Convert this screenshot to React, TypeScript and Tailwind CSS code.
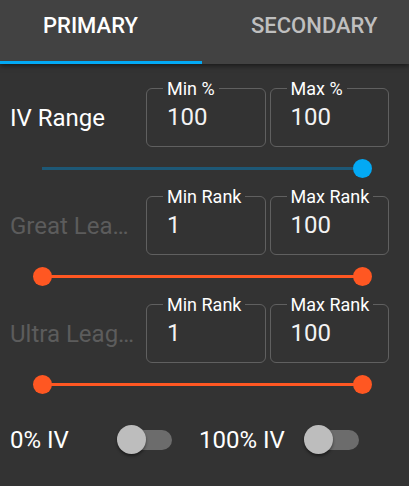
import React from 'react'

// ─── Champ « outlined » façon MUI (label dans l'encoche de la bordure) ───

function OutlinedField({ label, value }: { label: string; value: string }) {
  return (
    <div className="relative h-[59px] flex-1 rounded-[6px] border border-[#606060] pl-[20px] pt-[16px]">
      <span className="absolute left-[16px] top-0 -translate-y-1/2 bg-[#333333] px-[4px] text-[18px] leading-[18px] text-white">
        {label}
      </span>
      <div className="text-[24px] leading-[24px] text-[#f2f2f2]">{value}</div>
    </div>
  )
}

function Row({ label, dim, min, max }: { label: string; dim?: boolean; min: [string, string]; max: [string, string] }) {
  return (
    <div className="flex items-center pl-[10px] pr-[20px]">
      <div
        className={`w-[127px] shrink-0 truncate text-[24px] leading-[28px] ${dim ? 'text-[#5c5c5c]' : 'text-white'}`}
      >
        {label}
      </div>
      <div className="ml-[9px] flex flex-1 gap-[4px]">
        <OutlinedField label={min[0]} value={min[1]} />
        <OutlinedField label={max[0]} value={max[1]} />
      </div>
    </div>
  )
}

function RangeSlider({ variant }: { variant: 'blue' | 'orange' }) {
  const blue = variant === 'blue'
  return (
    <div className="h-[49px] pt-[12px]">
      <div className="relative mx-[42px] h-[19px] w-[320px]">
        <div
          className={`absolute left-0 right-0 top-[8px] h-[3px] ${blue ? 'bg-[#1d5876]' : 'bg-[#ff5722]'}`}
        />
        {!blue && (
          <div className="absolute left-[-9.5px] top-0 h-[19px] w-[19px] rounded-full bg-[#ff5722]" />
        )}
        <div
          className={`absolute right-[-9.5px] top-0 h-[19px] w-[19px] rounded-full ${blue ? 'bg-[#03a9f4]' : 'bg-[#ff5722]'}`}
        />
      </div>
    </div>
  )
}

function Toggle() {
  return (
    <div className="relative h-[29px] w-[55px] shrink-0">
      <div className="absolute right-0 top-[4.5px] h-[20px] w-[46px] rounded-full bg-[#6c6c6c]" />
      <div className="absolute left-0 top-0 h-[29px] w-[29px] rounded-full bg-[#bdbdbd] shadow-[0_2px_3px_rgba(0,0,0,0.45)]" />
    </div>
  )
}

export default function App() {
  return (
    <div className="h-[486px] w-[409px] overflow-hidden bg-[#333333] font-['Roboto',sans-serif]">
      {/* Onglets */}
      <div className="relative z-10 flex h-[64px] bg-[#424242] shadow-[0_2px_5px_rgba(0,0,0,0.5)]">
        <div className="h-[64px] w-[202px] border-b-[3px] border-[#03a9f4] pl-[43px] pt-[13px] text-[22px] font-medium leading-[26px] text-white">
          PRIMARY
        </div>
        <div className="h-[64px] flex-1 pl-[49px] pt-[13px] text-[22px] font-medium leading-[26px] text-[#bfbfbf]">
          SECONDARY
        </div>
      </div>

      <div className="pt-[24px]">
        <Row label="IV Range" min={['Min %', '100']} max={['Max %', '100']} />
        <RangeSlider variant="blue" />
        <Row label="Great League" dim min={['Min Rank', '1']} max={['Max Rank', '100']} />
        <RangeSlider variant="orange" />
        <Row label="Ultra League" dim min={['Min Rank', '1']} max={['Max Rank', '100']} />
        <RangeSlider variant="orange" />

        <div className="flex h-[55px] items-center pl-[10px]">
          <div className="w-[107px] text-[24px] leading-[28px] text-white">0% IV</div>
          <Toggle />
          <div className="ml-[27px] w-[105px] text-[24px] leading-[28px] text-white">100% IV</div>
          <Toggle />
        </div>
      </div>
    </div>
  )
}
